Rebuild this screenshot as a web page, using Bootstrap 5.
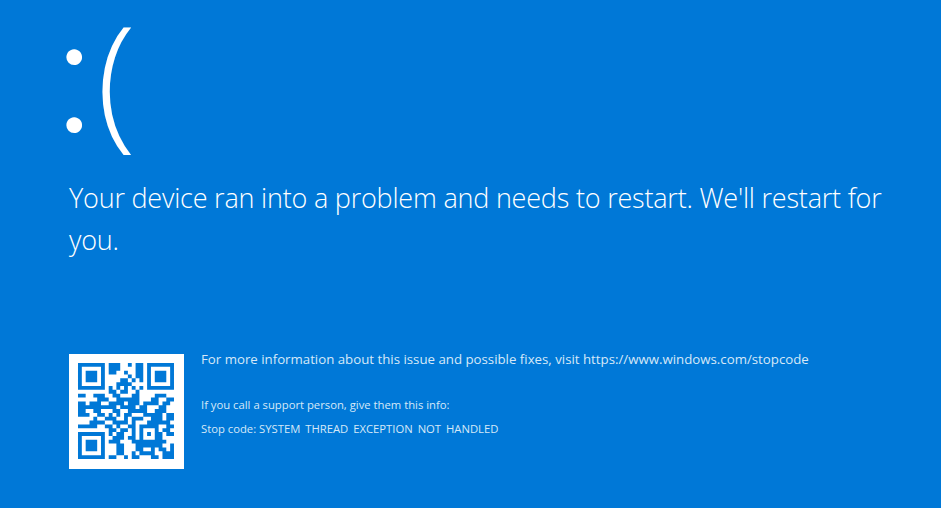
<!DOCTYPE html>
<html lang="en">
<head>
    <meta charset="UTF-8">
    <title>Stop code</title>
    <link href="https://cdn.jsdelivr.net/npm/bootstrap@5.3.3/dist/css/bootstrap.min.css" rel="stylesheet">
    <style>
        body { background: #0078d7; color: #fff; font-family: "Open Sans", "Liberation Sans", sans-serif; }
        .bsod-page { height: 508px; padding-left: 69px; padding-right: 40px; }
        .bsod-face { font-size: 145px; font-weight: 340; line-height: 133px; height: 133px; margin-left: -15px; gap: 2px; }
        .bsod-colon { font-family: Lato, "Open Sans", sans-serif; font-size: 169px; font-weight: 300; }
        .bsod-msg { font-size: 27px; letter-spacing: -0.21px; font-weight: 300; line-height: 42px; margin: 44px 0 93px; }
        .bsod-qr { width: 115px; height: 115px; background: #fff; flex: none; display: block; }
        .bsod-row { gap: 17px; }
        .bsod-info { font-size: 13.26px; line-height: 20px; color: #d6e8f8; margin-top: -5px; }
        .bsod-info p { margin: 0; }
        .bsod-info .bsod-lead { margin-bottom: 28px; }
        .bsod-info .bsod-ask { margin-bottom: 8px; }
        .bsod-small { font-size: 11.27px; line-height: 16px; }
        .bsod-code { word-spacing: 2px; }
    </style>
</head>
<body>
<div class="bsod-page">
    <div class="bsod-face d-flex align-items-baseline"><span class="bsod-colon">:</span><span>(</span></div>
    <p class="bsod-msg">Your device ran into a problem and needs to restart. We'll restart for you.</p>
    <div class="bsod-row d-flex">
        <svg class="bsod-qr" id="qr" viewBox="-2.34 -2.34 29.95 29.95" aria-label="QR code"></svg>
        <div class="bsod-info">
            <p class="bsod-lead">For more information about this issue and possible fixes, visit https://www.windows.com/stopcode</p>
            <p class="bsod-small bsod-ask">If you call a support person, give them this info:</p>
            <p class="bsod-small">Stop code: <span class="bsod-code">SYSTEM THREAD EXCEPTION NOT HANDLED</span></p>
        </div>
    </div>
</div>
<script>
    // QR modules, one string per row
    const rows = [
        '1111111011100101101111111',
        '1000001011100001101000001',
        '1011101011001001101011101',
        '1011101000000101101011101',
        '1011101000011010101011101',
        '1000001000111100001000001',
        '1111111010101010101111111',
        '0000000011011001000000000',
        '1100111001100011000011100',
        '0000011100111111000110011',
        '1101110011110111011110110',
        '1111111111011110110001100',
        '1100110001100111110011100',
        '1110011010101100011111011',
        '0000100111001011100111011',
        '0001111001111010001111110',
        '1111100110100110111110011',
        '0000000011011010100010110',
        '1111111010110010101011011',
        '1000001001110110100011000',
        '1011101011100011111111100',
        '1011101000110001111111001',
        '1011101000110001100101101',
        '1000001000110010111100111',
        '1111111011001011000110111'
    ];
    const qr = document.getElementById('qr');
    let d = '';
    rows.forEach((row, y) => {
        [...row].forEach((cell, x) => {
            if (cell === '1') d += `M${x} ${y}h1v1h-1z`;
        });
    });
    qr.innerHTML = `<path fill="#0078d7" d="${d}"/>`;
</script>
<script src="https://cdn.jsdelivr.net/npm/bootstrap@5.3.3/dist/js/bootstrap.bundle.min.js"></script>
</body>
</html>
